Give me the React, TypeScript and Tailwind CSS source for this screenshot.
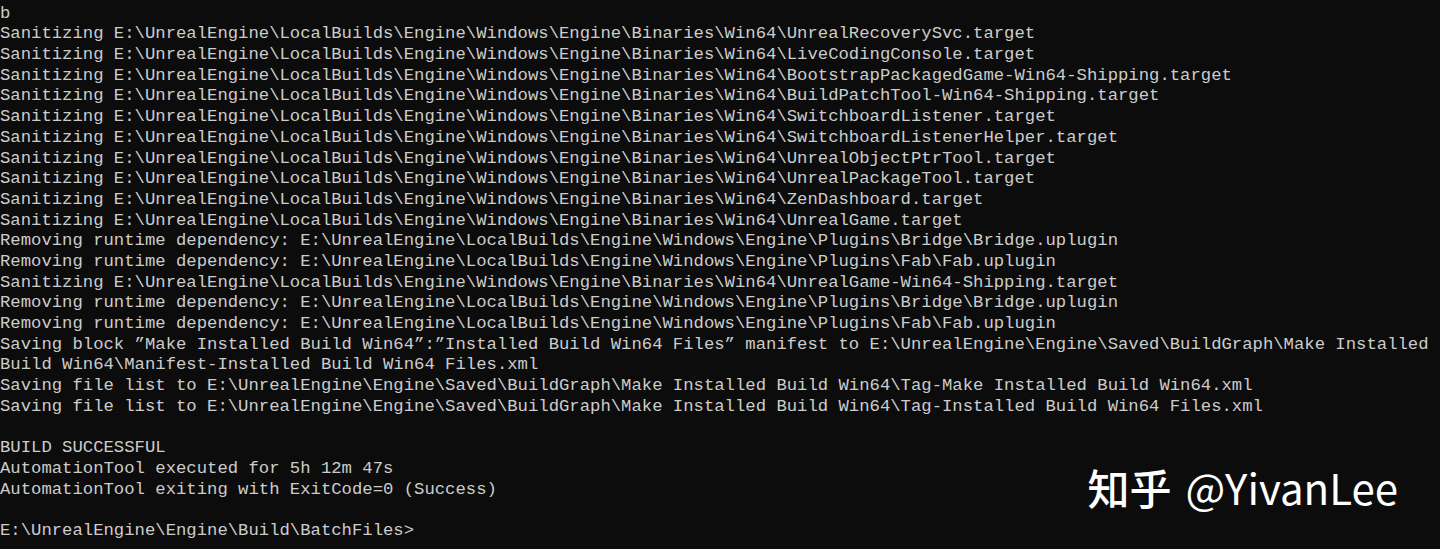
import React from 'react';

// first visible row is the tail of a wrapped line, only its descenders show
const topTail = (() => {
  const a = Array.from({ length: 138 }, () => 'a');
  [5, 14, 29, 43, 89].forEach((i) => (a[i] = 'g'));
  a[19] = ',';
  a[73] = 'j';
  a[137] = 'p';
  return a.join('');
})();

const bin = 'E:\\UnrealEngine\\LocalBuilds\\Engine\\Windows\\Engine\\Binaries\\Win64\\';
const plug = 'E:\\UnrealEngine\\LocalBuilds\\Engine\\Windows\\Engine\\Plugins\\';

const LINES: string[] = [
  topTail,
  'b',
  `Sanitizing ${bin}UnrealRecoverySvc.target`,
  `Sanitizing ${bin}LiveCodingConsole.target`,
  `Sanitizing ${bin}BootstrapPackagedGame-Win64-Shipping.target`,
  `Sanitizing ${bin}BuildPatchTool-Win64-Shipping.target`,
  `Sanitizing ${bin}SwitchboardListener.target`,
  `Sanitizing ${bin}SwitchboardListenerHelper.target`,
  `Sanitizing ${bin}UnrealObjectPtrTool.target`,
  `Sanitizing ${bin}UnrealPackageTool.target`,
  `Sanitizing ${bin}ZenDashboard.target`,
  `Sanitizing ${bin}UnrealGame.target`,
  `Removing runtime dependency: ${plug}Bridge\\Bridge.uplugin`,
  `Removing runtime dependency: ${plug}Fab\\Fab.uplugin`,
  `Sanitizing ${bin}UnrealGame-Win64-Shipping.target`,
  `Removing runtime dependency: ${plug}Bridge\\Bridge.uplugin`,
  `Removing runtime dependency: ${plug}Fab\\Fab.uplugin`,
  'Saving block \u201DMake Installed Build Win64\u201D:\u201DInstalled Build Win64 Files\u201D manifest to E:\\UnrealEngine\\Engine\\Saved\\BuildGraph\\Make Installed',
  'Build Win64\\Manifest-Installed Build Win64 Files.xml',
  'Saving file list to E:\\UnrealEngine\\Engine\\Saved\\BuildGraph\\Make Installed Build Win64\\Tag-Make Installed Build Win64.xml',
  'Saving file list to E:\\UnrealEngine\\Engine\\Saved\\BuildGraph\\Make Installed Build Win64\\Tag-Installed Build Win64 Files.xml',
  '',
  'BUILD SUCCESSFUL',
  'AutomationTool executed for 5h 12m 47s',
  'AutomationTool exiting with ExitCode=0 (Success)',
  '',
  'E:\\UnrealEngine\\Engine\\Build\\BatchFiles>',
];

export default function App() {
  return (
    <div className="relative w-[1440px] h-[549px] overflow-hidden bg-[#0c0c0c]">
      <div className="mt-[-17px] font-['Liberation_Mono',monospace] text-[17.25px] leading-[20.7px] text-[#cccccc]">
        {LINES.map((line, i) => (
          <div key={i} className="h-[20.7px] whitespace-pre">
            {line}
          </div>
        ))}
      </div>
      <div className="absolute right-[42px] top-[466px] flex items-center gap-[14px] text-white font-['Noto_Sans_CJK_SC',sans-serif] text-[42px] leading-none">
        <span className="font-medium">知乎</span>
        <span className="font-normal">@YivanLee</span>
      </div>
    </div>
  );
}
